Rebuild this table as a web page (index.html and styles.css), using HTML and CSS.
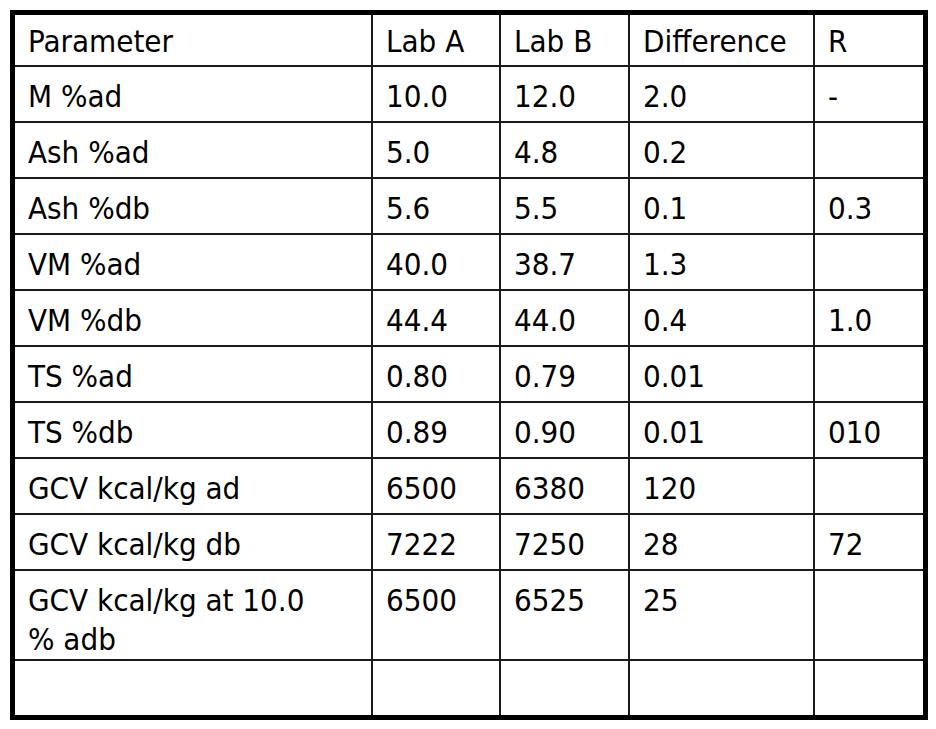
FILE: index.html
```html
<!DOCTYPE html>
<html>
<head>
<meta charset="utf-8">
<link rel="stylesheet" href="styles.css">
</head>
<body>
<div class="page">
<table class="data">
  <colgroup>
    <col class="c1"><col class="c2"><col class="c3"><col class="c4"><col class="c5">
  </colgroup>
  <tr class="head"><td>Parameter</td><td>Lab A</td><td>Lab B</td><td>Difference</td><td>R</td></tr>
  <tr><td>M %ad</td><td>10.0</td><td>12.0</td><td>2.0</td><td>-</td></tr>
  <tr><td>Ash %ad</td><td>5.0</td><td>4.8</td><td>0.2</td><td></td></tr>
  <tr><td>Ash %db</td><td>5.6</td><td>5.5</td><td>0.1</td><td>0.3</td></tr>
  <tr><td>VM %ad</td><td>40.0</td><td>38.7</td><td>1.3</td><td></td></tr>
  <tr><td>VM %db</td><td>44.4</td><td>44.0</td><td>0.4</td><td>1.0</td></tr>
  <tr><td>TS %ad</td><td>0.80</td><td>0.79</td><td>0.01</td><td></td></tr>
  <tr><td>TS %db</td><td>0.89</td><td>0.90</td><td>0.01</td><td>010</td></tr>
  <tr><td>GCV kcal/kg ad</td><td>6500</td><td>6380</td><td>120</td><td></td></tr>
  <tr><td>GCV kcal/kg db</td><td>7222</td><td>7250</td><td>28</td><td>72</td></tr>
  <tr class="tall"><td>GCV kcal/kg at 10.0<br>% adb</td><td>6500</td><td>6525</td><td>25</td><td></td></tr>
  <tr class="last"><td></td><td></td><td></td><td></td><td></td></tr>
</table>
</div>
</body>
</html>
```

FILE: styles.css
```css
html, body {
  margin: 0;
  padding: 0;
  background: #fff;
}
.page {
  padding: 10px 0 0 10px;
}
.data {
  border-collapse: separate;
  border-spacing: 0;
  border: 5px solid #000;
  table-layout: fixed;
  width: 918px;
  font-family: "DejaVu Sans Condensed", "DejaVu Sans", sans-serif;
  font-stretch: condensed;
  font-size: 31px;
  color: #000;
}
.c1 { width: 358px; }
.c2 { width: 128px; }
.c3 { width: 129px; }
.c4 { width: 185px; }
.c5 { width: 108px; }
.data td {
  box-sizing: border-box;
  border-right: 2px solid #1a1a1a;
  border-bottom: 2px solid #1a1a1a;
  padding: 10px 8px 0 13px;
  vertical-align: top;
  line-height: 39px;
  height: 56px;
  white-space: nowrap;
}
.data td:last-child {
  border-right: 0;
}
.data .head td {
  height: 52px;
  padding-top: 7px;
}
.data .tall td {
  height: 90px;
}
.data .last td {
  height: 54px;
  border-bottom: 0;
}
```
